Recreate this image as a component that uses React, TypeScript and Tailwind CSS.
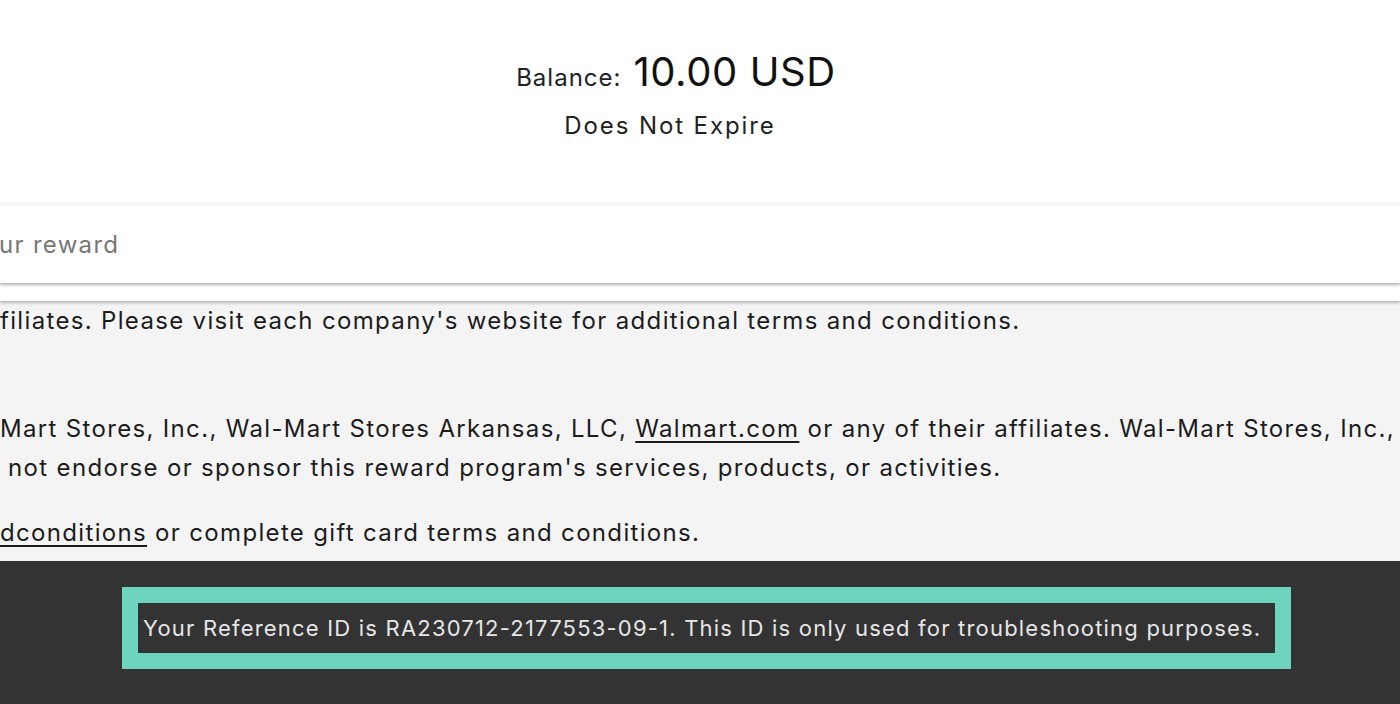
import React from "react";

const font = { fontFamily: "Inter, 'Noto Sans', sans-serif" };

export default function App() {
  return (
    <div className="w-[1400px] h-[704px] overflow-hidden bg-[#f4f4f4] text-[#1c1c1c] flex flex-col" style={font}>
      {/* Balance header + search */}
      <div className="bg-white shadow-[0_2px_3px_rgba(0,0,0,0.25)] pb-[18px]">
        <div className="h-[203px] flex flex-col items-center pt-[52px] pr-[48px]">
          <div className="flex items-baseline gap-[12px]">
            <span className="text-[24px] tracking-[1px] text-[#222]">Balance:</span>
            <span className="text-[40px] tracking-[0.6px] text-[#111] leading-none">10.00 USD</span>
          </div>
          <div className="mt-[12px] mr-[12px] text-[24px] text-[#222] tracking-[1.9px]">Does Not Expire</div>
        </div>
        <div className="h-[80px] border-t-[3px] border-[#f5f5f5] bg-white shadow-[0_2px_3px_rgba(0,0,0,0.3)] flex items-center">
          <span className="text-[24px] tracking-[1.3px] text-[#777] ml-[-1px]">ur reward</span>
        </div>
      </div>

      {/* Disclaimer text */}
      <div className="flex-1 text-[24px] leading-[39px] tracking-[1.33px] whitespace-nowrap">
        <p className="mt-[0px]">filiates. Please visit each company's website for additional terms and conditions.</p>
        <p className="mt-[69px]">
          Mart Stores, Inc., Wal-Mart Stores Arkansas, LLC, <span className="underline underline-offset-4">Walmart.com</span> or any of their affiliates. Wal-Mart Stores, Inc.,
        </p>
        <p>&nbsp;not endorse or sponsor this reward program's services, products, or activities.</p>
        <p className="mt-[26px]">
          <span className="underline underline-offset-4">dconditions</span> or complete gift card terms and conditions.
        </p>
      </div>

      {/* Footer */}
      <div className="h-[143px] bg-[#333333] flex pt-[26px] pl-[122px]">
        <div className="h-[82px] w-[1169px] bg-[#6dd5bd] p-[16px]">
          <div className="h-full bg-[#333333] flex items-center px-[5px] text-[22px] tracking-[1.2px] text-[#e6e6e6] whitespace-nowrap">
            Your Reference ID is RA230712-2177553-09-1. This ID is only used for troubleshooting purposes.
          </div>
        </div>
      </div>
    </div>
  );
}
